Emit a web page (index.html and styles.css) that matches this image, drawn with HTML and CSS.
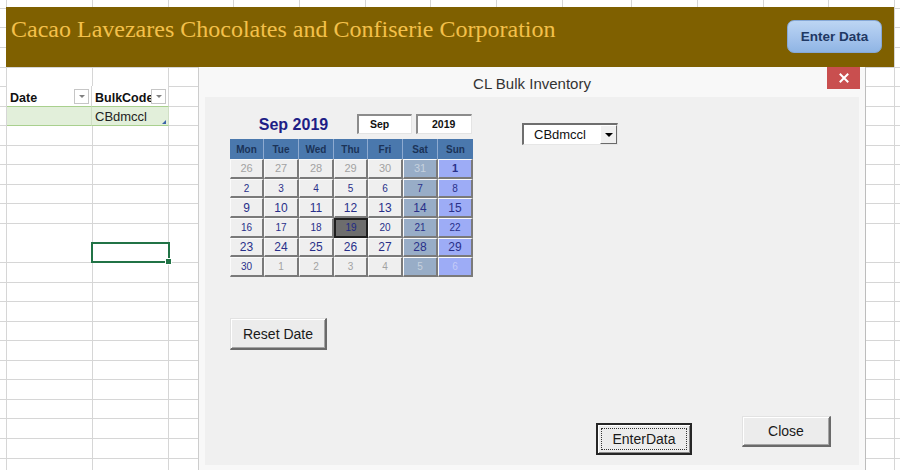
FILE: index.html
```html
<!DOCTYPE html>
<html>
<head>
<meta charset="utf-8">
<title>CL Bulk Inventory</title>
<link rel="stylesheet" href="styles.css">
</head>
<body>
<div class="banner">
  <div class="banner-title">Cacao Lavezares Chocolates and Confiserie Corporation</div>
  <button class="btn-enter">Enter Data</button>
</div>

<div class="sheet">
  <div class="tbl">
    <div class="th">Date<span class="filter"></span></div>
    <div class="th">BulkCode<span class="filter"></span></div>
    <div class="td"></div>
    <div class="td">CBdmccl<span class="handle"></span></div>
  </div>
  <div class="sel-cell"></div>
</div>

<div class="dialog">
  <div class="titlebar">
    <span></span>
    <span class="title">CL Bulk Inventory</span>
    <button class="x-btn"><svg width="10" height="10" viewBox="0 0 10 10"><path d="M1.5 1.5L8.5 8.5M8.5 1.5L1.5 8.5" stroke="#fff" stroke-width="2" stroke-linecap="square"/></svg></button>
  </div>
  <div class="client">
    <div class="top">
      <div class="cal">
        <div class="cal-head">
          <div class="cal-title">Sep 2019</div>
          <div class="box box-mon">Sep</div>
          <div class="box box-yr">2019</div>
        </div>
        <div class="cal-grid">
          <div class="dh">Mon</div><div class="dh">Tue</div><div class="dh">Wed</div><div class="dh">Thu</div><div class="dh">Fri</div><div class="dh">Sat</div><div class="dh last">Sun</div>
          <div class="wk md">
            <div class="c o">26</div><div class="c o">27</div><div class="c o">28</div><div class="c o">29</div><div class="c o">30</div><div class="c sat o">31</div><div class="c sun b">1</div>
          </div>
          <div class="wk sm">
            <div class="c">2</div><div class="c">3</div><div class="c">4</div><div class="c">5</div><div class="c">6</div><div class="c sat">7</div><div class="c sun">8</div>
          </div>
          <div class="wk lg">
            <div class="c">9</div><div class="c">10</div><div class="c">11</div><div class="c">12</div><div class="c">13</div><div class="c sat">14</div><div class="c sun">15</div>
          </div>
          <div class="wk sm">
            <div class="c">16</div><div class="c">17</div><div class="c">18</div><div class="c cur">19</div><div class="c">20</div><div class="c sat">21</div><div class="c sun">22</div>
          </div>
          <div class="wk lg">
            <div class="c">23</div><div class="c">24</div><div class="c">25</div><div class="c">26</div><div class="c">27</div><div class="c sat">28</div><div class="c sun">29</div>
          </div>
          <div class="wk sm">
            <div class="c">30</div><div class="c o">1</div><div class="c o">2</div><div class="c o">3</div><div class="c o">4</div><div class="c sat o">5</div><div class="c sun o">6</div>
          </div>
        </div>
      </div>
      <div class="combo">
        <span class="combo-text">CBdmccl</span>
        <span class="combo-btn"><span class="tri"></span></span>
      </div>
    </div>
    <button class="btn btn-reset">Reset Date</button>
    <div class="actions">
      <button class="btn btn-default">EnterData</button>
      <button class="btn btn-close">Close</button>
    </div>
  </div>
</div>
</body>
</html>
```
FILE: styles.css
```css
html, body {
  margin: 0;
  padding: 0;
}

body {
  width: 900px;
  height: 470px;
  overflow: hidden;
  position: relative;
  font-family: "Liberation Sans", Arial, sans-serif;
  background-color: #ffffff;
  background-image:
    linear-gradient(to right,
      transparent 6px, #d6d6d6 6px 7px,
      transparent 7px 92px, #d6d6d6 92px 93px,
      transparent 93px 168px, #d6d6d6 168px 169px,
      transparent 169px 233px, #d6d6d6 233px 234px,
      transparent 234px 299px, #d6d6d6 299px 300px,
      transparent 300px 365px, #d6d6d6 365px 366px,
      transparent 366px 430px, #d6d6d6 430px 431px,
      transparent 431px 496px, #d6d6d6 496px 497px,
      transparent 497px 562px, #d6d6d6 562px 563px,
      transparent 563px 631px, #d6d6d6 631px 632px,
      transparent 632px 697px, #d6d6d6 697px 698px,
      transparent 698px 763px, #d6d6d6 763px 764px,
      transparent 764px 828px, #d6d6d6 828px 829px,
      transparent 829px 894px, #d6d6d6 894px 895px,
      transparent 895px),
    repeating-linear-gradient(to bottom,
      transparent 0 7.9px, #d6d6d6 7.9px 8.9px, transparent 8.9px 19.55px);
}

/* ---------- banner shape ---------- */
.banner {
  margin: 7px 0 0 6px;
  width: 888px;
  height: 60px;
  background: #7f6000;
  display: flex;
  justify-content: space-between;
  align-items: flex-start;
}

.banner-title {
  margin: 8px 0 0 5px;
  font-family: "Liberation Serif", "Times New Roman", serif;
  font-size: 24px;
  line-height: 28px;
  color: #f4c04a;
  white-space: nowrap;
}

.btn-enter {
  margin: 13px 12px 0 0;
  width: 95px;
  height: 33px;
  padding: 0;
  border: 1px solid #86a8d6;
  border-radius: 7px;
  background: linear-gradient(to bottom, #bcd5f3 0%, #a4c3ec 55%, #8fb5e4 100%);
  color: #1f3864;
  font-family: "Liberation Sans", Arial, sans-serif;
  font-weight: bold;
  font-size: 13.5px;
}

/* ---------- worksheet ---------- */
.sheet {
  padding-left: 7px;
}

.tbl {
  margin-top: 19px;
  display: grid;
  grid-template-columns: 85px 77px;
  grid-template-rows: 20px 20px;
  font-size: 12.5px;
  color: #111;
}

.th {
  position: relative;
  background: #fff;
  font-weight: bold;
  line-height: 20px;
  padding: 2px 0 0 3px;
  box-sizing: border-box;
  border-right: 1px solid #d6d6d6;
  overflow: hidden;
  white-space: nowrap;
}

.filter {
  position: absolute;
  right: 2px;
  top: 3px;
  width: 15px;
  height: 15px;
  box-sizing: border-box;
  background: #fff;
  border: 1px solid #c6c6c6;
}

.filter::after {
  content: "";
  position: absolute;
  left: 4px;
  top: 5px;
  border-left: 3px solid transparent;
  border-right: 3px solid transparent;
  border-top: 3px solid #808080;
}

.td {
  position: relative;
  background: #e2efda;
  border-top: 1px solid #a9d08e;
  border-bottom: 1px solid #a9d08e;
  border-right: 1px solid #d0dfc5;
  line-height: 19px;
  padding-left: 3px;
  font-size: 13px;
  color: #222;
}

.handle {
  position: absolute;
  right: 2px;
  bottom: 1px;
  width: 0;
  height: 0;
  border-left: 4px solid transparent;
  border-bottom: 4px solid #3b64a8;
}

.sel-cell {
  margin: 116px 0 0 84px;
  width: 79px;
  height: 21px;
  box-sizing: border-box;
  border: 2px solid #217346;
  position: relative;
}

.sel-cell::after {
  content: "";
  position: absolute;
  right: -4px;
  bottom: -4px;
  width: 5px;
  height: 5px;
  background: #217346;
  border: 1px solid #fff;
}

/* ---------- dialog window ---------- */
.dialog {
  position: absolute;
  left: 198px;
  top: 67px;
  width: 668px;
  height: 410px;
  box-sizing: border-box;
  background: #f8f8f8;
  border-left: 1px solid #cdcdcd;
  border-right: 1px solid #bdbdbd;
  padding: 0 6px;
}

.titlebar {
  height: 30px;
  display: grid;
  grid-template-columns: 1fr auto 1fr;
  align-items: start;
}

.title {
  margin-top: 8px;
  font-size: 15px;
  color: #333;
  line-height: 18px;
}

.x-btn {
  justify-self: end;
  width: 33px;
  height: 22px;
  margin-right: -1px;
  padding: 0;
  border: 0;
  background: #c94f4f;
  display: flex;
  align-items: center;
  justify-content: center;
}

.client {
  height: 368px;
  box-sizing: border-box;
  background: #f0f0f0;
  padding: 17px 0 0 25px;
  display: flex;
  flex-direction: column;
  align-items: flex-start;
}

.top {
  display: flex;
  align-items: flex-start;
}

.cal {
  width: 243px;
}

.cal-head {
  display: flex;
  height: 20px;
}

.cal-title {
  width: 127px;
  text-align: center;
  font-weight: bold;
  font-size: 16px;
  line-height: 21px;
  color: #1e1e86;
}

.box {
  box-sizing: border-box;
  height: 20px;
  background: #fff;
  border-style: solid;
  border-width: 2px 1px 1px 2px;
  border-color: #8c8c8c #e4e4e4 #e4e4e4 #8c8c8c;
  font-weight: bold;
  font-size: 10.5px;
  line-height: 17px;
  color: #111;
}

.box-mon {
  width: 55px;
  padding-left: 11px;
}

.box-yr {
  width: 56px;
  margin-left: 4px;
  padding-left: 14px;
}

.cal-grid {
  margin-top: 5px;
  display: grid;
  grid-template-columns: 34px 35px 35px 34px 35px 35px 35px;
  grid-template-rows: 20px repeat(6, 19.7px);
}

.dh {
  background: #4a78ad;
  color: #1b3358;
  font-weight: bold;
  font-size: 10px;
  border-right: 1px solid #8eaad0;
  display: flex;
  align-items: center;
  justify-content: center;
}

.dh.last {
  border-right: 0;
}

.wk {
  display: contents;
}

.wk.sm { font-size: 10px; }
.wk.md { font-size: 11px; }
.wk.lg { font-size: 12px; }

.c {
  box-sizing: border-box;
  display: flex;
  align-items: center;
  justify-content: center;
  background: #efefef;
  color: #29308a;
  border-style: solid;
  border-width: 1px 2px 2px 1px;
  border-color: #fbfbfb #7a7a7a #7a7a7a #fbfbfb;
}

.c.o { color: #a2a2a2; }
.c.sat { background: #98adc7; }
.c.sun { background: #9dacf6; }
.c.sat.o { color: #c6d1de; }
.c.sun.o { color: #c4cbf7; }
.c.b { font-weight: bold; }

.c.cur {
  background: #6d6d6d;
  border: 2px solid #1e1e1e;
  color: #1e2a86;
}

/* combo box */
.combo {
  margin: 9px 0 0 49px;
  width: 96px;
  height: 22px;
  box-sizing: border-box;
  background: #fff;
  border-style: solid;
  border-width: 2px 1px 1px 2px;
  border-color: #6e6e6e #e6e6e6 #e6e6e6 #6e6e6e;
  display: flex;
  align-items: stretch;
}

.combo-text {
  flex: 1;
  padding-left: 10px;
  font-size: 13px;
  line-height: 19px;
  color: #111;
}

.combo-btn {
  width: 17px;
  box-sizing: border-box;
  background: #f0f0f0;
  border-style: solid;
  border-width: 1px;
  border-color: #fff #6a6a6a #6a6a6a #fff;
  display: flex;
  align-items: center;
  justify-content: center;
}

.tri {
  width: 0;
  height: 0;
  border-left: 4px solid transparent;
  border-right: 4px solid transparent;
  border-top: 4px solid #000;
}

/* buttons */
.btn {
  box-sizing: border-box;
  padding: 0;
  font-family: "Liberation Sans", Arial, sans-serif;
  font-size: 14px;
  color: #1a1a1a;
  background: #ececec;
  border-style: solid;
  border-width: 1px 2px 2px 1px;
  border-color: #e2e2e2 #6a6a6a #6a6a6a #e2e2e2;
  box-shadow: inset 1px 1px 0 #ffffff, inset -1px -1px 0 #a4a4a4;
}

.btn-reset {
  margin-top: 41px;
  width: 97px;
  height: 32px;
}

.actions {
  align-self: stretch;
  display: flex;
  justify-content: flex-end;
  align-items: flex-start;
  padding-right: 28px;
  margin-top: 66px;
}

.btn-default {
  margin: 7px 50px 0 0;
  width: 96px;
  height: 32px;
  border: 2px solid #262626;
  box-shadow: inset 1px 1px 0 #ffffff, inset -1px -1px 0 #8a8a8a;
  outline: 1px dotted #333;
  outline-offset: -6px;
}

.btn-close {
  width: 89px;
  height: 31px;
}
```
